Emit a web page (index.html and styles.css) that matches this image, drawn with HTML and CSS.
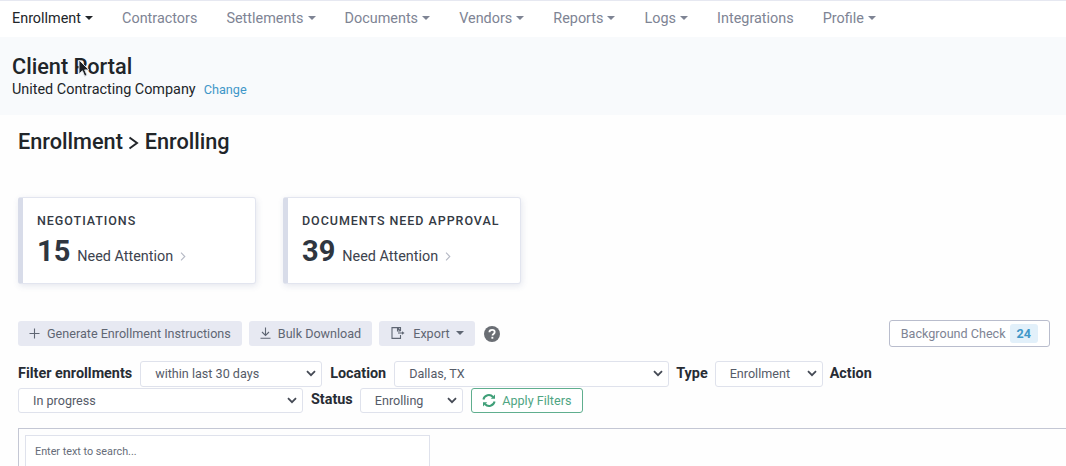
FILE: index.html
```html
<!DOCTYPE html>
<html lang="en">
<head>
<meta charset="utf-8">
<title>Client Portal</title>
<link rel="stylesheet" href="styles.css">
</head>
<body>
<nav class="nav">
  <a class="nav-item active caret">Enrollment</a>
  <a class="nav-item">Contractors</a>
  <a class="nav-item caret">Settlements</a>
  <a class="nav-item caret">Documents</a>
  <a class="nav-item caret">Vendors</a>
  <a class="nav-item caret">Reports</a>
  <a class="nav-item caret">Logs</a>
  <a class="nav-item">Integrations</a>
  <a class="nav-item caret">Profile</a>
</nav>
<header class="portal">
  <h1 class="portal-title">Client Portal</h1>
  <div class="portal-sub"><span>United Contracting Company</span><a class="change">Change</a></div>
  <svg class="cursor" width="12" height="19" viewBox="0 0 12 19"><path d="M1 1v14l3.4-3.2 2.3 5.4 2.3-1-2.3-5.3H11z" fill="#1b1e22" stroke="#dfe2e6" stroke-width="1"/></svg>
</header>
<main class="content">
  <h2 class="crumb">Enrollment <svg class="crumb-sep" width="11" height="14" viewBox="0 0 11 14"><path d="M1.5 1.5 9 7l-7.5 5.5" fill="none" stroke="#212529" stroke-width="2"/></svg> Enrolling</h2>
  <section class="cards">
    <a class="card">
      <div class="card-title">NEGOTIATIONS</div>
      <div class="card-row"><b class="card-num">15</b><span class="card-text">Need Attention</span><svg class="card-arrow" width="6" height="9" viewBox="0 0 6 10"><path d="M.8.8 5 5 .8 9.2" fill="none" stroke="#b4b8c4" stroke-width="1.2"/></svg></div>
    </a>
    <a class="card">
      <div class="card-title">DOCUMENTS NEED APPROVAL</div>
      <div class="card-row"><b class="card-num">39</b><span class="card-text">Need Attention</span><svg class="card-arrow" width="6" height="9" viewBox="0 0 6 10"><path d="M.8.8 5 5 .8 9.2" fill="none" stroke="#b4b8c4" stroke-width="1.2"/></svg></div>
    </a>
  </section>
  <section class="actions">
    <button class="btn"><svg width="11" height="11" viewBox="0 0 11 11"><path d="M5.5.5v10M.5 5.5h10" stroke="#5f6673" stroke-width="1.1" fill="none"/></svg>Generate Enrollment Instructions</button>
    <button class="btn"><svg width="11" height="12" viewBox="0 0 11 12"><path d="M5.5.5v7.5M2 5l3.5 3.5L9 5M.5 11.3h10" stroke="#5f6673" stroke-width="1.1" fill="none"/></svg>Bulk Download</button>
    <button class="btn btn-export"><svg width="14" height="12" viewBox="0 0 14 12"><path d="M9.5 4V.6H1v10.8h8.5V8M6.5.6V4h3M6.5.6l3 3.4" stroke="#5f6673" stroke-width="1.1" fill="none"/><path d="M7 6h4.5" stroke="#5f6673" stroke-width="1.1"/><path d="M11 4.3 13.5 6 11 7.7z" fill="#5f6673"/></svg>Export<i class="tri"></i></button>
    <svg class="help" width="16" height="16" viewBox="0 0 16 16"><circle cx="8" cy="8" r="8" fill="#6a6e74"/><path d="M5.4 6.2c0-1.5 1.1-2.4 2.7-2.4 1.5 0 2.6.9 2.6 2.2 0 2-2.2 1.9-2.2 3.5" fill="none" stroke="#fff" stroke-width="1.8"/><rect x="7.4" y="10.8" width="1.9" height="1.9" fill="#fff"/></svg>
    <button class="bgcheck">Background Check<span class="badge">24</span></button>
  </section>
  <form class="filters">
    <label class="flabel">Filter enrollments</label>
    <select class="sel sel-date"><option>within last 30 days</option></select>
    <label class="flabel">Location</label>
    <select class="sel sel-loc"><option>Dallas, TX</option></select>
    <label class="flabel flabel-tight">Type</label>
    <select class="sel sel-type"><option>Enrollment</option></select>
    <label class="flabel flabel-tight">Action</label>
    <select class="sel sel-action"><option>In progress</option></select>
    <label class="flabel">Status</label>
    <select class="sel sel-status"><option>Enrolling</option></select>
    <button type="button" class="apply"><svg width="14" height="13" viewBox="0 0 14 13"><path d="M1.4 5.4A5.6 5.6 0 0 1 11 3M12.6 7.6A5.6 5.6 0 0 1 3 10" fill="none" stroke="#3f9f78" stroke-width="2"/><path d="M13 .6v4.2H8.8zM1 12.4V8.2h4.2z" fill="#3f9f78"/></svg>Apply Filters</button>
  </form>
  <section class="table-box">
    <input class="search" type="text" placeholder="Enter text to search...">
  </section>
</main>
</body>
</html>
```
FILE: styles.css
```css
* { box-sizing: border-box; }
html, body { margin: 0; height: 466px; overflow: hidden; }
body { background: #fefefe; font-family: Roboto, "Liberation Sans", sans-serif; color: #212529; font-size: 14px; }
.nav { display: flex; height: 37px; padding: 0 0 0 12px; gap: 29.1px; align-items: center; background: #fff; border-top: 1px solid #e6e8f1; box-shadow: 0 1px 3px rgba(60,70,110,.16); position: relative; }
.nav-item { color: #7e8494; font-size: 14.4px; line-height: 20px; white-space: nowrap; }
.nav-item.active { color: #212529; }
.caret::after { content: ""; display: inline-block; margin-left: 4px; vertical-align: 3px; border-top: 4px solid currentColor; border-left: 4px solid transparent; border-right: 4px solid transparent; }
.portal { position: relative; height: 78px; padding: 17px 12px 0; background: #f8fafc; }
.portal-title { margin: 0; font-size: 21.7px; line-height: 26px; font-weight: 500; color: #212529; }
.portal-sub { display: flex; align-items: baseline; gap: 8px; font-size: 14.4px; line-height: 20px; margin-top: 0; }
.change { color: #3f97c8; font-size: 12.7px; }
.cursor { position: absolute; left: 78px; top: 22px; }
.content { padding: 0 16px 0 18px; }
.crumb { margin: 0; padding-top: 14px; height: 82px; font-size: 21.7px; line-height: 26px; font-weight: 500; }
.crumb-sep { margin: 0; vertical-align: -1px; }
.cards { display: flex; gap: 27px; }
.card { width: 238px; height: 87px; padding: 15px 14px 0; background: #fff; border: 1px solid #e2e5ef; border-left: 5px solid #d8dce9; border-radius: 3px; box-shadow: 1px 2px 6px rgba(80,90,140,.14); }
.card-title { font-size: 12.5px; line-height: 16px; font-weight: 500; letter-spacing: .95px; color: #343a44; }
.card-row { display: flex; align-items: baseline; margin-top: 3px; height: 38px; }
.card-num { font-size: 29px; line-height: 38px; font-weight: 700; color: #2f3640; margin-right: 7px; }
.card-text { font-size: 14.4px; color: #3d434e; }
.card-arrow { margin-left: 7px; }
.actions { display: flex; align-items: center; margin-top: 36px; gap: 7px; height: 27px; }
.btn { display: flex; align-items: center; gap: 7px; height: 25px; padding: 0 11px 1px; border: 0; border-radius: 3px; background: #e7e9f2; color: #5f6673; font: 12.6px Roboto, sans-serif; }
.btn-export { padding-left: 12px; gap: 8px; }
.tri { margin-left: -1.5px; border-top: 4px solid #5f6673; border-left: 4px solid transparent; border-right: 4px solid transparent; }
.help { margin-left: 2px; }
.bgcheck { display: flex; align-items: center; gap: 4px; margin-left: auto; height: 27px; padding: 0 11px 1px; background: #fff; border: 1px solid #b9bdcd; border-radius: 3px; color: #7e8494; font: 12.6px Roboto, sans-serif; }
.badge { padding: 0 7px; line-height: 19px; background: #e2f0fa; border-radius: 3px; color: #3f97c8; font-weight: 700; }
.filters { display: flex; flex-wrap: wrap; align-items: center; column-gap: 8px; row-gap: 1px; margin-top: 14px; width: 900px; }
.flabel { font-size: 14.4px; font-weight: 700; color: #272c34; padding-bottom: 1px; }
.flabel-tight { margin-left: -1px; }
.sel { height: 25.5px; padding: 0 20px 0 14px; border: 1px solid #dfe2ec; border-radius: 3px; color: #555b68; font: 12.6px Roboto, sans-serif; appearance: none; -webkit-appearance: none; background: #fff url("data:image/svg+xml,%3Csvg xmlns='http://www.w3.org/2000/svg' width='10' height='7' viewBox='0 0 10 7'%3E%3Cpath d='M1 1.2 5 5.2 9 1.2' fill='none' stroke='%23454a55' stroke-width='1.8'/%3E%3C/svg%3E") no-repeat right 5px center; }
.sel-date { width: 182px; }
.sel-loc { width: 275px; }
.sel-type { width: 108px; margin-left: -1px; }
.sel-action { width: 285px; }
.sel-status { width: 103px; margin-left: -1px; }
.apply { display: flex; align-items: center; gap: 6.5px; height: 25.5px; width: 112px; padding: 0 10px; background: #fff; border: 1px solid #5fae8e; border-radius: 3px; color: #4fa583; font: 12.6px Roboto, sans-serif; white-space: nowrap; }
.table-box { margin: 15px -16px 0 0; padding: 6px; height: 60px; border: 1px solid #c4c7d4; border-right: 0; }
.search { display: block; width: 405px; height: 40px; padding: 0 9px 8px; border: 1px solid #dfe2ec; font: 10.8px Roboto, sans-serif; background: #fff; color: #555; }
.search::placeholder { color: #666c78; opacity: 1; }
```
